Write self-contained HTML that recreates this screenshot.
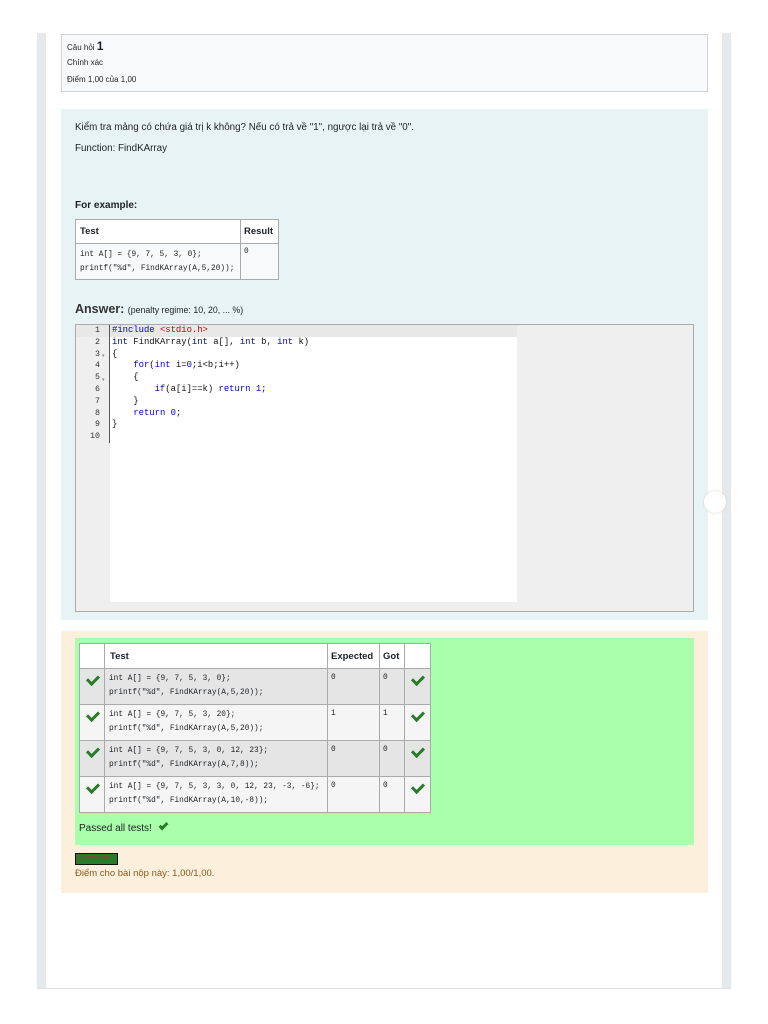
<!DOCTYPE html>
<html><head><meta charset="utf-8"><style>
*{box-sizing:border-box;margin:0;padding:0}
body{width:768px;height:1024px;background:#fff;position:relative;font-family:"Liberation Sans","Noto Sans CJK SC",sans-serif;color:#1d2125;overflow:hidden}
.abs{position:absolute}
.mono{font-family:"Liberation Mono","DejaVu Sans Mono",monospace}
table{border-collapse:collapse}
td.c{border:1px solid #aaa;font-family:"Liberation Mono",monospace;font-size:7.8px;line-height:14px;white-space:pre;vertical-align:top;padding:3px 4px}
td.v{border:1px solid #aaa;font-family:"Liberation Mono",monospace;font-size:7.8px;vertical-align:top;padding:5px 3px}
td.ck{border:1px solid #aaa;vertical-align:top;padding:4px 0 0 6px}
td.ck::after{content:"";display:block;width:5px;height:9px;border:solid #2a7a2a;border-width:0 3px 3px 0;transform:rotate(45deg);margin-left:3px}
</style></head><body>
<div class="abs" style="left:37px;top:33px;width:694px;height:956px;background:#e6e9ec;border-bottom:1px solid #dee2e6"></div>
<div class="abs" style="left:46px;top:33px;width:676px;height:955px;background:#fff"></div>

<div class="abs" style="left:61px;top:34px;width:647px;height:58px;background:#f8f9fa;border:1px solid #cfd2d6;font-size:8px;padding:4px 0 0 5px">
<div style="height:15px">Câu hỏi <b style="font-size:12px">1</b></div>
<div style="height:18px;padding-top:4px">Chính xác</div>
<div style="padding-top:3px">Điểm 1,00 của 1,00</div>
</div>

<div class="abs" style="left:61px;top:109px;width:647px;height:511px;background:#e7f3f5"></div>
<div class="abs" style="left:75px;top:122px;font-size:9.8px">Kiểm tra mảng có chứa giá trị k không? Nếu có trả về "1", ngược lại trả về "0".</div>
<div class="abs" style="left:75px;top:143px;font-size:9.8px">Function: FindKArray</div>
<div class="abs" style="left:75px;top:200px;font-size:10px;font-weight:bold">For example:</div>
<table class="abs" style="left:75px;top:219px;font-size:9.5px;background:#f8f9fa">
<tr style="height:24px;background:#fff"><th style="width:165px;border:1px solid #aaa;text-align:left;padding-left:4px">Test</th><th style="width:38px;border:1px solid #aaa;text-align:left;padding-left:3px">Result</th></tr>
<tr style="height:36px"><td class="mono" style="border:1px solid #aaa;font-size:7.8px;line-height:14px;padding:0 4px;vertical-align:top;padding-top:4px;white-space:pre">int A[] = {9, 7, 5, 3, 0};
printf("%d", FindKArray(A,5,20));</td><td class="mono" style="border:1px solid #aaa;font-size:7.8px;vertical-align:top;padding:4px 3px">0</td></tr>
</table>
<div class="abs" style="left:75px;top:302px;font-size:12.5px;font-weight:bold;color:#333">Answer: <span style="font-size:8.8px;font-weight:normal;color:#1d2125">(penalty regime: 10, 20, ... %)</span></div>

<div class="abs" style="left:75px;top:324px;width:619px;height:288px;background:#efefef;border:1px solid #aaa"></div>
<div class="abs" style="left:110px;top:325px;width:407px;height:277px;background:#fff"></div>
<div class="abs" style="left:76px;top:325px;width:441px;height:12px;background:#e8e8e8"></div>
<div class="abs" style="left:109px;top:325px;width:1px;height:118px;background:#555"></div>
<div class="abs mono" style="left:76px;top:325px;width:24px;text-align:right;font-size:8.3px;line-height:11.8px;color:#333;white-space:pre">1
2
3
4
5
6
7
8
9
10</div>
<div class="abs" style="left:102px;top:353px;font-size:5px;color:#888">▾</div>
<div class="abs" style="left:102px;top:377px;font-size:5px;color:#888">▾</div>
<div class="abs mono" style="left:112px;top:325px;font-size:8.9px;line-height:11.8px;color:#111;white-space:pre"><span style="color:#00c">#include</span> <span style="color:#c00">&lt;stdio.h&gt;</span>
<span style="color:#00c">int</span> FindKArray(<span style="color:#00c">int</span> a[], <span style="color:#00c">int</span> b, <span style="color:#00c">int</span> k)
{
    <span style="color:#00c">for</span>(<span style="color:#00c">int</span> i=<span style="color:#00c">0</span>;i&lt;b;i++)
    {
        <span style="color:#00c">if</span>(a[i]==k) <span style="color:#00c">return</span> <span style="color:#00c">1</span>;
    }
    <span style="color:#00c">return</span> <span style="color:#00c">0</span>;
}</div>
<div class="abs" style="left:704px;top:491px;width:22px;height:22px;border-radius:50%;background:#fff;box-shadow:0 0 2px #ccc"></div>

<div class="abs" style="left:61px;top:631px;width:647px;height:262px;background:#fcefdc"></div>
<div class="abs" style="left:75px;top:638px;width:619px;height:207px;background:#aaffaa"></div>
<table class="abs" style="left:79px;top:643px;font-size:9.5px;border:1px solid #aaa">
<tr style="height:25px;background:#fff;font-weight:bold"><td style="width:25px;border:1px solid #aaa"></td><td style="width:223px;border:1px solid #aaa;padding-left:5px">Test</td><td style="width:52px;border:1px solid #aaa;padding-left:3px">Expected</td><td style="width:25px;border:1px solid #aaa;padding-left:3px">Got</td><td style="width:26px;border:1px solid #aaa"></td></tr>
<tr style="height:36px;background:#e5e5e5"><td class="ck"></td><td class="c">int A[] = {9, 7, 5, 3, 0};
printf("%d", FindKArray(A,5,20));</td><td class="v">0</td><td class="v">0</td><td class="ck"></td></tr>
<tr style="height:36px;background:#f5f5f5"><td class="ck"></td><td class="c">int A[] = {9, 7, 5, 3, 20};
printf("%d", FindKArray(A,5,20));</td><td class="v">1</td><td class="v">1</td><td class="ck"></td></tr>
<tr style="height:36px;background:#e5e5e5"><td class="ck"></td><td class="c">int A[] = {9, 7, 5, 3, 0, 12, 23};
printf("%d", FindKArray(A,7,8));</td><td class="v">0</td><td class="v">0</td><td class="ck"></td></tr>
<tr style="height:36px;background:#f5f5f5"><td class="ck"></td><td class="c">int A[] = {9, 7, 5, 3, 3, 0, 12, 23, -3, -6};
printf("%d", FindKArray(A,10,-8));</td><td class="v">0</td><td class="v">0</td><td class="ck"></td></tr>
</table>
<div class="abs" style="left:79px;top:823px;font-size:10px">Passed all tests!</div>
<div class="abs" style="left:161px;top:821px;width:5px;height:9px;border:solid #2a7a2a;border-width:0 3px 3px 0;transform:rotate(45deg)"></div>
<div class="abs" style="left:75px;top:853px;width:43px;height:12px;background:#2a7a2a;border:1px solid #111;font-size:7px;color:#a33;padding-left:3px;line-height:10px">Chính xác</div>
<div class="abs" style="left:75px;top:868px;font-size:9.5px;color:#8a5a1a">Điểm cho bài nộp này: 1,00/1,00.</div>
</body></html>
